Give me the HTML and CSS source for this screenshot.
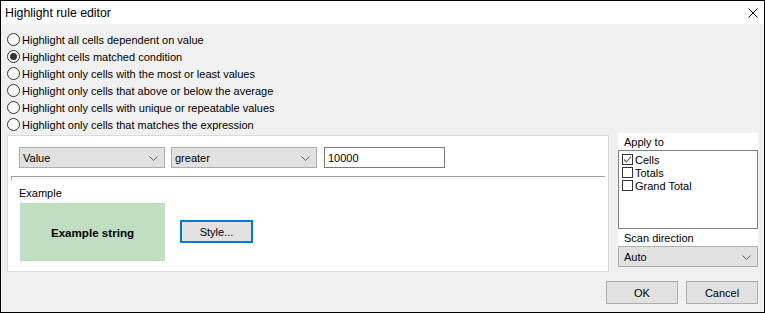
FILE: index.html
```html
<!DOCTYPE html>
<html lang="en">

<head>
    <link rel="stylesheet" href="styles.css">
    <title>Highlight rule editor</title>
</head>

<body>
    <div class="janela">
        <div class="titulo">
            <span class="titulo-text">Highlight rule editor</span>
            <svg class="fechar" width="10" height="10" viewBox="0 0 10 10">
                <path d="M0.5 0.5 L9.5 9.5 M9.5 0.5 L0.5 9.5" stroke="#000" stroke-width="1" fill="none" />
            </svg>
        </div>
        <div class="conteudo">
            <div class="modos">
                <div class="radio"><span class="bolinha"></span>Highlight all cells dependent on value</div>
                <div class="radio"><span class="bolinha marcada"></span>Highlight cells matched condition</div>
                <div class="radio"><span class="bolinha"></span>Highlight only cells with the most or least values</div>
                <div class="radio"><span class="bolinha"></span>Highlight only cells that above or below the average</div>
                <div class="radio"><span class="bolinha"></span>Highlight only cells with unique or repeatable values</div>
                <div class="radio"><span class="bolinha"></span>Highlight only cells that matches the expression</div>
            </div>
            <div class="principal">
                <div class="regra">
                    <div class="condicao">
                        <div class="combo combo-valor">
                            <span>Value</span>
                            <svg width="9" height="5" viewBox="0 0 9 5"><path d="M0.5 0.5 L4.5 4.5 L8.5 0.5" stroke="#606060" fill="none" /></svg>
                        </div>
                        <div class="combo combo-op">
                            <span>greater</span>
                            <svg width="9" height="5" viewBox="0 0 9 5"><path d="M0.5 0.5 L4.5 4.5 L8.5 0.5" stroke="#606060" fill="none" /></svg>
                        </div>
                        <div class="campo">10000</div>
                    </div>
                    <div class="grupo">
                        <div class="grupo-borda"></div>
                        <div class="grupo-label">Example</div>
                        <div class="exemplo">
                            <div class="amostra">Example string</div>
                            <div class="botao botao-foco">Style...</div>
                        </div>
                    </div>
                </div>
                <div class="lateral">
                    <div class="lateral-label">Apply to</div>
                    <div class="lista">
                        <div class="item"><span class="caixa marcada">
                            <svg width="9" height="9" viewBox="0 0 9 9"><path d="M1 4.5 L3.5 7 L8 1.5" stroke="#555" stroke-width="1.1" fill="none" /></svg>
                        </span>Cells</div>
                        <div class="item"><span class="caixa"></span>Totals</div>
                        <div class="item"><span class="caixa"></span>Grand Total</div>
                    </div>
                    <div class="lateral-label">Scan direction</div>
                    <div class="combo combo-scan">
                        <span>Auto</span>
                        <svg width="9" height="5" viewBox="0 0 9 5"><path d="M0.5 0.5 L4.5 4.5 L8.5 0.5" stroke="#606060" fill="none" /></svg>
                    </div>
                </div>
            </div>
            <div class="rodape">
                <div class="botao">OK</div>
                <div class="botao">Cancel</div>
            </div>
        </div>
    </div>
</body>

</html>
```

FILE: styles.css
```css
* {
    box-sizing: border-box;
    margin: 0;
    padding: 0;
}

body {
    font-family: "Liberation Sans", Arial, sans-serif;
    font-size: 11px;
    color: #000;
    background: #f0f0f0;
}

.janela {
    width: 765px;
    height: 313px;
    border: 1px solid #000;
    display: flex;
    flex-direction: column;
    background: #f0f0f0;
}

.titulo {
    height: 23px;
    background: #fff;
    display: flex;
    align-items: center;
    justify-content: space-between;
    padding-left: 4px;
    padding-right: 6px;
}

.titulo-text {
    font-size: 12.3px;
}

.conteudo {
    flex: 1;
    display: flex;
    flex-direction: column;
    padding: 0 6px;
}

.modos {
    padding-top: 7px;
    display: flex;
    flex-direction: column;
}

.radio {
    height: 17px;
    display: flex;
    align-items: center;
    gap: 2px;
}

.bolinha {
    width: 13px;
    height: 13px;
    border: 1px solid #333;
    border-radius: 50%;
    background: #fff;
    display: flex;
    justify-content: center;
    align-items: center;
}

.bolinha.marcada::after {
    content: "";
    width: 7px;
    height: 7px;
    border-radius: 50%;
    background: #333;
}

.principal {
    display: flex;
    justify-content: space-between;
    align-items: flex-start;
}

.regra {
    width: 602px;
    height: 137px;
    margin-top: 2px;
    background: #fff;
    border: 1px solid #dadada;
    padding: 11px 3px 0 3px;
}

.condicao {
    display: flex;
    gap: 6px;
    padding-left: 8px;
}

.combo {
    height: 21px;
    background: #e1e1e1;
    border: 1px solid #adadad;
    display: flex;
    align-items: center;
    justify-content: space-between;
    padding: 0 6px 0 3px;
}

.combo svg {
    margin-top: 1px;
}

.combo-valor {
    width: 146px;
}

.combo-op {
    width: 146px;
}

.campo {
    width: 121px;
    height: 21px;
    margin-left: 1px;
    border: 1px solid #7a7a7a;
    background: #fff;
    display: flex;
    align-items: center;
    padding-left: 3px;
}

.grupo {
    margin-top: 8px;
}

.grupo-borda {
    height: 4px;
    border-top: 1px solid #a0a0a0;
    border-left: 1px solid #a0a0a0;
}

.grupo-label {
    padding-left: 8px;
    height: 15px;
    line-height: 15px;
    margin-top: 6px;
}

.exemplo {
    display: flex;
    align-items: center;
    gap: 15px;
    margin-top: 2px;
    padding-left: 9px;
}

.amostra {
    width: 145px;
    height: 58px;
    background: #c1dec2;
    font-weight: bold;
    font-size: 11.6px;
    display: flex;
    justify-content: center;
    align-items: center;
}

.botao {
    width: 72px;
    height: 23px;
    background: #e1e1e1;
    border: 1px solid #adadad;
    display: flex;
    justify-content: center;
    align-items: center;
}

.botao-foco {
    width: 73px;
    border: 2px solid #0078d7;
    margin-top: -1px;
}

.lateral {
    width: 140px;
    background: #fff;
    display: flex;
    flex-direction: column;
}

.lateral-label {
    height: 17px;
    display: flex;
    align-items: center;
    padding-left: 6px;
}

.lista {
    height: 79px;
    border: 1px solid #828282;
    padding: 2px 3px;
}

.item {
    height: 13px;
    display: flex;
    align-items: center;
    gap: 2px;
}

.caixa {
    width: 11px;
    height: 11px;
    border: 1px solid #333;
    background: #fff;
    display: flex;
    justify-content: center;
    align-items: center;
}

.combo-scan {
    padding-left: 5px;
}

.rodape {
    display: flex;
    justify-content: flex-end;
    gap: 8px;
    margin-top: 9px;
}
```
